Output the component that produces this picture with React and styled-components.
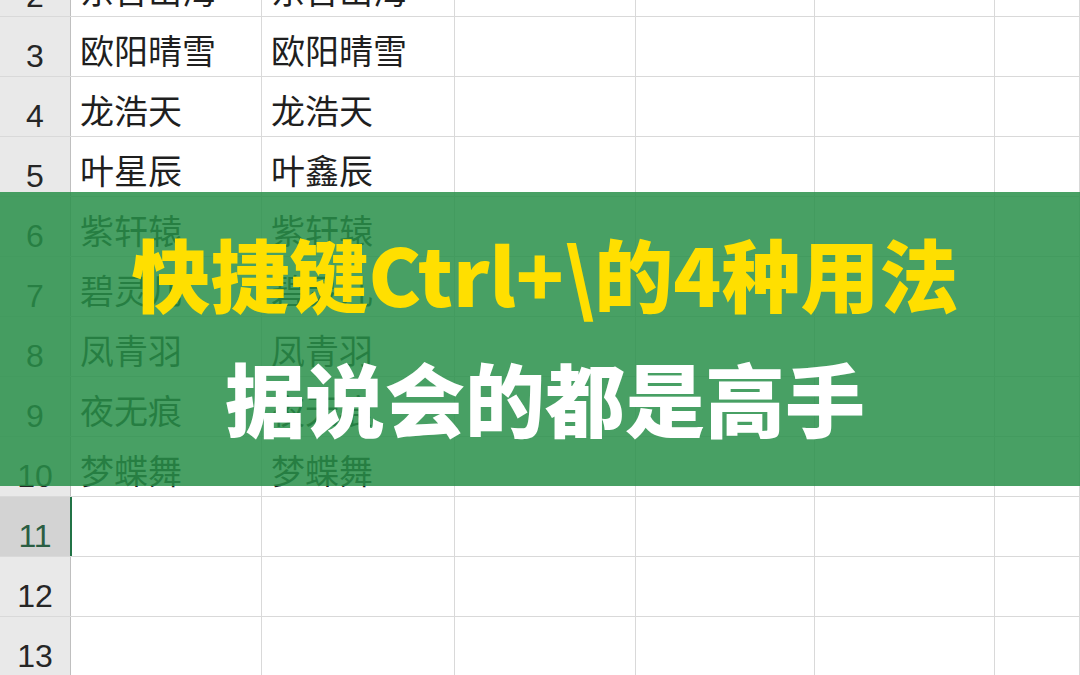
import React from 'react';
import styled, { createGlobalStyle } from 'styled-components';

const GlobalStyle = createGlobalStyle`
  html, body {
    margin: 0;
    padding: 0;
    background: #ffffff;
    overflow: hidden;
  }
  body {
    font-family: "Noto Sans CJK SC", "Noto Sans", sans-serif;
  }
`;

const Screen = styled.div`
  position: relative;
  width: 1080px;
  height: 675px;
  overflow: hidden;
  background: #ffffff;
`;

const Sheet = styled.div`
  display: flex;
  flex-direction: column;
  margin-top: -43px;
`;

const Row = styled.div`
  display: grid;
  grid-template-columns: 71px 191px 193px 181px 179px 180px 1fr;
  height: 60px;
  border-bottom: 1px solid #d9d9d9;
  box-sizing: border-box;
`;

const RowHeader = styled.div`
  display: flex;
  align-items: flex-end;
  justify-content: center;
  padding-bottom: 2px;
  background: ${(p) => (p.$active ? '#d3d3d3' : '#e9e9e9')};
  border-right: 1px solid #bfbfbf;
  color: ${(p) => (p.$active ? '#2b5e43' : '#262626')};
  font-family: "Liberation Sans", Arial, sans-serif;
  font-size: 32px;
  line-height: 1.1;
  box-sizing: border-box;
`;

const Cell = styled.div`
  display: flex;
  align-items: flex-end;
  padding: 0 0 5px 9px;
  border-right: 1px solid #d9d9d9;
  font-size: 34px;
  line-height: 1.2;
  color: #1f1f1f;
  white-space: nowrap;
  box-sizing: border-box;
  ${(p) => p.$selected && 'border-left: 2px solid #217346; margin-left: -1px;'}
`;

const Banner = styled.div`
  position: absolute;
  left: 0;
  right: 0;
  top: 192px;
  height: 294px;
  background: rgba(40, 143, 73, 0.85);
  display: flex;
  flex-direction: column;
  align-items: center;
  justify-content: flex-start;
  gap: 44px;
  padding: 41px 0 0 10px;
  box-sizing: border-box;
`;

const Headline = styled.div`
  font-family: "Noto Sans CJK SC", "Noto Sans", sans-serif;
  font-weight: 900;
  font-size: ${(p) => p.$size}px;
  line-height: 1;
  color: ${(p) => p.$color};
  white-space: nowrap;
`;

const rows = [
  { n: 2, a: '东晋山海', b: '东晋山海' },
  { n: 3, a: '欧阳晴雪', b: '欧阳晴雪' },
  { n: 4, a: '龙浩天', b: '龙浩天' },
  { n: 5, a: '叶星辰', b: '叶鑫辰' },
  { n: 6, a: '紫轩辕', b: '紫轩辕' },
  { n: 7, a: '碧灵儿', b: '碧灵儿' },
  { n: 8, a: '凤青羽', b: '凤青羽' },
  { n: 9, a: '夜无痕', b: '夜无痕' },
  { n: 10, a: '梦蝶舞', b: '梦蝶舞' },
  { n: 11, a: '', b: '', active: true },
  { n: 12, a: '', b: '' },
  { n: 13, a: '', b: '' },
];

export default function App() {
  return (
    <Screen>
      <GlobalStyle />
      <Sheet>
        {rows.map((r) => (
          <Row key={r.n}>
            <RowHeader $active={r.active}>{r.n}</RowHeader>
            <Cell $selected={r.active}>{r.a}</Cell>
            <Cell>{r.b}</Cell>
            <Cell />
            <Cell />
            <Cell />
            <Cell />
          </Row>
        ))}
      </Sheet>
      <Banner>
        <Headline $size={79} $color="#ffdf00">快捷键Ctrl+\的4种用法</Headline>
        <Headline $size={80} $color="#ffffff">据说会的都是高手</Headline>
      </Banner>
    </Screen>
  );
}
